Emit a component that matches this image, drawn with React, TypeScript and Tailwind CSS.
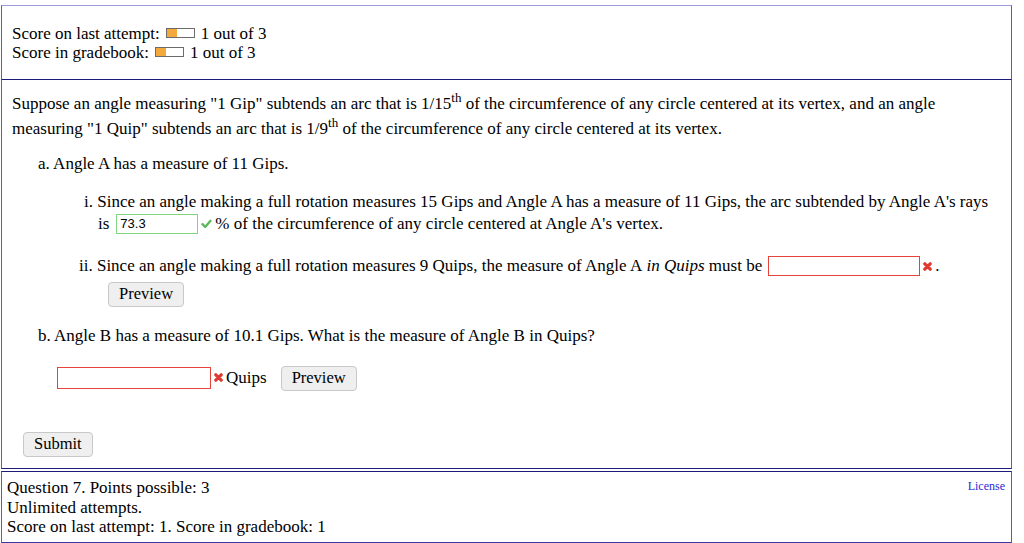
import React from "react";

function Bar() {
  return (
    <span className="inline-flex align-middle mx-[6px] w-[29px] h-[10px] border border-[#6b6b6b] bg-white relative top-[-1px]">
      <span className="block w-[10px] h-full bg-[#f3a93c]" />
    </span>
  );
}

function Check() {
  return (
    <svg width="11" height="10" viewBox="0 0 11 10" className="inline-block align-middle mx-[3px]">
      <path d="M1.5 5.2 L4.2 8 L9.5 1.8" fill="none" stroke="#5cb85c" strokeWidth="2.4" strokeLinecap="round" strokeLinejoin="round" />
    </svg>
  );
}

function Cross() {
  return (
    <svg width="9" height="9" viewBox="0 0 9 9" className="inline-block align-middle mx-[3px]">
      <path d="M1.8 1.8 L7.2 7.2 M7.2 1.8 L1.8 7.2" fill="none" stroke="#e0392f" strokeWidth="3.2" strokeLinecap="round" />
    </svg>
  );
}

function Btn({ children }: { children: React.ReactNode }) {
  return (
    <button className="h-[25px] px-[10px] bg-[#efefef] border border-[#c8c8c8] rounded-[4px] text-[16.5px] leading-none text-black" style={{ fontFamily: '"Liberation Serif", serif' }}>
      {children}
    </button>
  );
}

export default function App() {
  return (
    <div className="bg-white w-[1024px] h-[543px] text-black text-[17px]" style={{ fontFamily: '"Liberation Serif", "Times New Roman", serif' }}>
      <div className="pt-[5px] ml-[1px] w-[1011px]">
        {/* header box */}
        <div className="h-[75px] border-t border-x border-b border-t-[#9a9ad8] border-x-[#5a5abf] border-b-[#1c1c7c] px-[10px] pt-[18px] leading-[20px]">
          <div className="flex items-center h-[20px]">
            Score on last attempt:<Bar />1 out of 3
          </div>
          <div className="flex items-center h-[20px] -mt-[1px]">
            Score in gradebook:<Bar />1 out of 3
          </div>
        </div>

        {/* question */}
        <div className="h-[389px] border-x border-b border-x-[#5a5abf] border-b-[#1c1c7c] px-[10px] pt-[11px]">
          <p className="leading-[25px]">
            Suppose an angle measuring "1 Gip" subtends an arc that is 1/15<sup className="text-[13px] leading-none relative -top-[7px]">th</sup> of the circumference of any circle centered at its vertex, and an angle measuring "1 Quip" subtends an arc that is 1/9<sup className="text-[13px] leading-none relative -top-[7px]">th</sup> of the circumference of any circle centered at its vertex.
          </p>

          <div className="pl-[26px] mt-[13px] leading-[20px]">a. Angle A has a measure of 11 Gips.</div>

          <div className="pl-[72px] mt-[17px] leading-[22px]">
            i. Since an angle making a full rotation measures 15 Gips and Angle A has a measure of 11 Gips, the arc subtended by Angle A's rays
            <div className="pl-[14px] flex items-center h-[22px]">
              is
              <span className="ml-[7px] inline-flex items-center w-[82px] h-[20px] border border-[#7fd67f] px-[3px] text-[13px]" style={{ fontFamily: '"Liberation Sans", Arial, sans-serif' }}>73.3</span>
              <Check />
              <span>% of the circumference of any circle centered at Angle A's vertex.</span>
            </div>
          </div>

          <div className="pl-[67px] mt-[20px] leading-[22px] flex items-center h-[22px]">
            ii. Since an angle making a full rotation measures 9 Quips, the measure of Angle A&nbsp;<i>in Quips</i>&nbsp;must be
            <span className="ml-[6px] inline-block w-[152px] h-[20px] border border-[#e5443a]" />
            <Cross />
            <span>.</span>
          </div>
          <div className="pl-[96px] mt-[4px]">
            <Btn>Preview</Btn>
          </div>

          <div className="pl-[26px] mt-[19px] leading-[20px]">b. Angle B has a measure of 10.1 Gips. What is the measure of Angle B in Quips?</div>

          <div className="pl-[45px] mt-[20px] flex items-center h-[24px]">
            <span className="inline-block w-[154px] h-[22px] border border-[#e5443a]" />
            <Cross />
            <span>Quips</span>
            <span className="ml-[14px]"><Btn>Preview</Btn></span>
          </div>

          <div className="pl-[11px] mt-[41px]">
            <Btn>Submit</Btn>
          </div>
        </div>

        {/* footer */}
        <div className="mt-[2px] h-[72px] border-t border-x border-b border-t-[#1c1c7c] border-x-[#5a5abf] border-b-[#3a3aa0] px-[5px] pt-[6px] leading-[19.5px] relative">
          <a className="absolute right-[6px] top-[5px] text-[12px] text-[#2a2ad0]">License</a>
          <div>Question 7. Points possible: 3</div>
          <div>Unlimited attempts.</div>
          <div>Score on last attempt: 1. Score in gradebook: 1</div>
        </div>
      </div>
    </div>
  );
}
